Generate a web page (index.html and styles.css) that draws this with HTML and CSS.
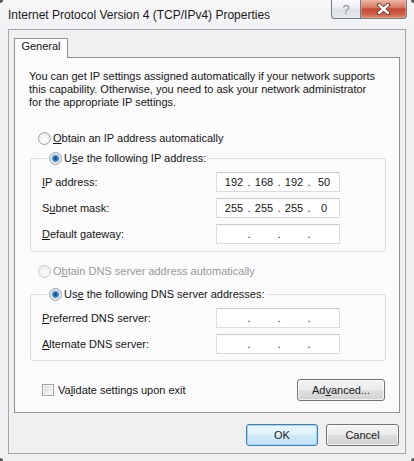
FILE: index.html
```html
<!DOCTYPE html>
<html>
<head>
<meta charset="utf-8">
<link rel="stylesheet" href="styles.css">
</head>
<body>
<div class="window">
  <div class="titlebar">
    <div class="title">Internet Protocol Version 4 (TCP/IPv4) Properties</div>
    <div class="caption">
      <div class="cbtn help">?</div>
      <div class="cbtn close">
        <svg width="15" height="12" viewBox="0 0 15 12">
          <path d="M3 2 L12 10 M12 2 L3 10" stroke="#6a3328" stroke-width="4.2" stroke-linecap="round"/>
          <path d="M3 2 L12 10 M12 2 L3 10" stroke="#ffffff" stroke-width="2.4" stroke-linecap="round"/>
        </svg>
      </div>
    </div>
  </div>
  <div class="client">
    <div class="tabs"><div class="tab">General</div></div>
    <div class="panel">
      <p class="intro">You can get IP settings assigned automatically if your network supports<br>this capability. Otherwise, you need to ask your network administrator<br>for the appropriate IP settings.</p>

      <div class="option first"><span class="radio"></span><span><u>O</u>btain an IP address automatically</span></div>

      <fieldset class="group">
        <legend class="option legend"><span class="radio checked"></span><span>U<u>s</u>e the following IP address:</span></legend>
        <div class="rows">
          <div class="lbl"><u>I</u>P address:</div>
          <div class="ip"><span class="seg">192</span><span class="dot">.</span><span class="seg">168</span><span class="dot">.</span><span class="seg">192</span><span class="dot">.</span><span class="seg">50</span></div>
          <div class="lbl">S<u>u</u>bnet mask:</div>
          <div class="ip"><span class="seg">255</span><span class="dot">.</span><span class="seg">255</span><span class="dot">.</span><span class="seg">255</span><span class="dot">.</span><span class="seg">0</span></div>
          <div class="lbl"><u>D</u>efault gateway:</div>
          <div class="ip"><span class="seg"></span><span class="dot">.</span><span class="seg"></span><span class="dot">.</span><span class="seg"></span><span class="dot">.</span><span class="seg"></span></div>
        </div>
      </fieldset>

      <div class="option second disabled"><span class="radio"></span><span>O<u>b</u>tain DNS server address automatically</span></div>

      <fieldset class="group group2">
        <legend class="option legend"><span class="radio checked"></span><span>Us<u>e</u> the following DNS server addresses:</span></legend>
        <div class="rows">
          <div class="lbl"><u>P</u>referred DNS server:</div>
          <div class="ip"><span class="seg"></span><span class="dot">.</span><span class="seg"></span><span class="dot">.</span><span class="seg"></span><span class="dot">.</span><span class="seg"></span></div>
          <div class="lbl"><u>A</u>lternate DNS server:</div>
          <div class="ip"><span class="seg"></span><span class="dot">.</span><span class="seg"></span><span class="dot">.</span><span class="seg"></span><span class="dot">.</span><span class="seg"></span></div>
        </div>
      </fieldset>

      <div class="bottomrow">
        <div class="check"><span class="box"></span><span>Va<u>l</u>idate settings upon exit</span></div>
        <div class="btn advanced">Ad<u>v</u>anced...</div>
      </div>
    </div>
    <div class="actions">
      <div class="btn ok">OK</div>
      <div class="btn cancel">Cancel</div>
    </div>
  </div>
  <span class="corner tl"></span><span class="corner tr"></span><span class="corner bl"></span><span class="corner br"></span>
</div>
</body>
</html>
```

FILE: styles.css
```css
* { box-sizing: border-box; }
html, body { margin: 0; padding: 0; }
body {
  width: 414px;
  height: 461px;
  overflow: hidden;
  background: #f3f4f6;
  font-family: "Liberation Sans", Arial, sans-serif;
  font-size: 11px;
  color: #151515;
}
.window {
  position: relative;
  width: 414px;
  height: 461px;
  background: linear-gradient(#f7f7f8, #eff0f2 40px, #eff0f2);
}
.titlebar {
  height: 29px;
  display: flex;
  justify-content: space-between;
  align-items: flex-start;
}
.title {
  padding: 8px 0 0 8px;
  font-size: 12px;
  line-height: 14px;
  color: #1a1a1a;
}
.caption {
  display: flex;
  margin-right: 7px;
}
.cbtn {
  height: 19px;
  border: 1px solid #6f7a8a;
  border-top: none;
  display: flex;
  align-items: center;
  justify-content: center;
}
.help {
  width: 29px;
  border-right: none;
  border-radius: 0 0 0 4px;
  background: linear-gradient(#fbfbfc, #eceef1 45%, #dcdfe4 50%, #e6e9ed);
  color: #8c8f94;
  font-size: 13px;
  line-height: 15px;
}
.close {
  width: 47px;
  border-radius: 0 0 4px 0;
  background: linear-gradient(#eab0a0, #d8806a 40%, #c64a33 50%, #cc5c45 75%, #d98a72);
  box-shadow: inset 0 0 0 1px rgba(255,200,180,0.35);
}
.client {
  margin-left: 8px;
  width: 398px;
  height: 425px;
  border: 1px solid #a3a7ad;
  background: #f0f0f0;
  padding: 8px 0 0 5px;
}
.tabs {
  display: flex;
  height: 19px;
}
.tab {
  position: relative;
  z-index: 1;
  width: 54px;
  height: 20px;
  border: 1px solid #8e9196;
  border-bottom: none;
  background: #fbfbfb;
  text-align: center;
  line-height: 15px;
}
.panel {
  width: 386px;
  height: 356px;
  border: 1px solid #8e9196;
  background: #fbfbfb;
  padding: 12px 0 0 14px;
}
.intro {
  margin: 0;
  line-height: 13px;
}
.option {
  display: flex;
  align-items: center;
  height: 15px;
  gap: 2px;
  line-height: 15px;
}
.option.first { margin: 22px 0 0 9px; }
.option.second { margin: 12px 0 0 9px; }
.disabled { color: #999999; }
.radio {
  width: 13px;
  height: 13px;
  border-radius: 50%;
  border: 1px solid #a3a6aa;
  background: radial-gradient(circle at 50% 60%, #ffffff 0, #f3f3f3 45%, #dadada 100%);
  flex: none;
}
.radio.checked {
  border-color: #9aa0a6;
  background:
    radial-gradient(circle at 50% 50%, #133f73 0, #24629e 1.5px, #4b93cf 2.8px, #a6d2f0 3.9px, rgba(255,255,255,0) 4.4px),
    radial-gradient(circle at 50% 60%, #ffffff 0, #f0f0f0 50%, #d6d6d6 100%);
}
.disabled .radio {
  border-color: #cbcdd0;
  background: radial-gradient(circle at 50% 60%, #fbfbfb 0, #f2f2f2 60%, #e6e6e6 100%);
}
.group {
  margin: 5px 0 0 1px;
  width: 356px;
  padding: 0 0 7px 11px;
  border: 1px solid #d5dfe5;
  border-radius: 3px;
}
.group2 {
  margin-top: 8px;
  padding-bottom: 6px;
}
.legend {
  margin-left: 5px;
  padding: 0 2px;
}
.rows {
  margin-top: 6px;
  display: grid;
  grid-template-columns: 174px 124px;
  grid-auto-rows: 20px;
  row-gap: 6px;
  align-items: center;
}
.lbl { line-height: 14px; }
.ip {
  height: 20px;
  background: #ffffff;
  border: 1px solid #d9dcdf;
  border-top-color: #c6c9cd;
  display: flex;
  align-items: center;
  padding-left: 4px;
}
.seg {
  width: 26px;
  text-align: center;
}
.dot {
  width: 4px;
  text-align: center;
}
.bottomrow {
  margin: 18px 0 0 13px;
  width: 343px;
  height: 22px;
  display: flex;
  justify-content: space-between;
  align-items: center;
}
.check {
  display: flex;
  align-items: center;
  gap: 4px;
}
.box {
  width: 12px;
  height: 12px;
  border: 1px solid #a0a3a7;
  background: linear-gradient(135deg, #d6d6d6, #f6f6f6 80%);
  box-shadow: inset 0 0 0 1px #f7f7f7;
}
.btn {
  height: 22px;
  border: 1px solid #737373;
  border-radius: 3px;
  background: linear-gradient(#f4f4f4, #ececec 48%, #dedede 52%, #d2d2d2);
  box-shadow: inset 0 0 0 1px rgba(255,255,255,0.7);
  display: flex;
  align-items: center;
  justify-content: center;
  color: #1a1a1a;
}
.advanced { width: 88px; }
.actions {
  display: flex;
  justify-content: flex-end;
  gap: 8px;
  margin-top: 11px;
  padding-right: 6px;
}
.ok {
  width: 72px;
  border-color: #3c7fb1;
  background: linear-gradient(#eaf6fd, #dff1fb 48%, #cde9f8 52%, #c2e3f5);
  box-shadow: inset 0 0 0 1px #9fd6f5;
}
.cancel { width: 73px; }
.corner {
  position: absolute;
  width: 3px;
  height: 3px;
  background: #555;
}
.corner.tl { left: 0; top: 0; border-radius: 0 0 3px 0; }
.corner.tr { right: 0; top: 0; border-radius: 0 0 0 3px; }
.corner.bl { left: 0; bottom: 0; border-radius: 0 3px 0 0; }
.corner.br { right: 0; bottom: 0; border-radius: 3px 0 0 0; }
```
